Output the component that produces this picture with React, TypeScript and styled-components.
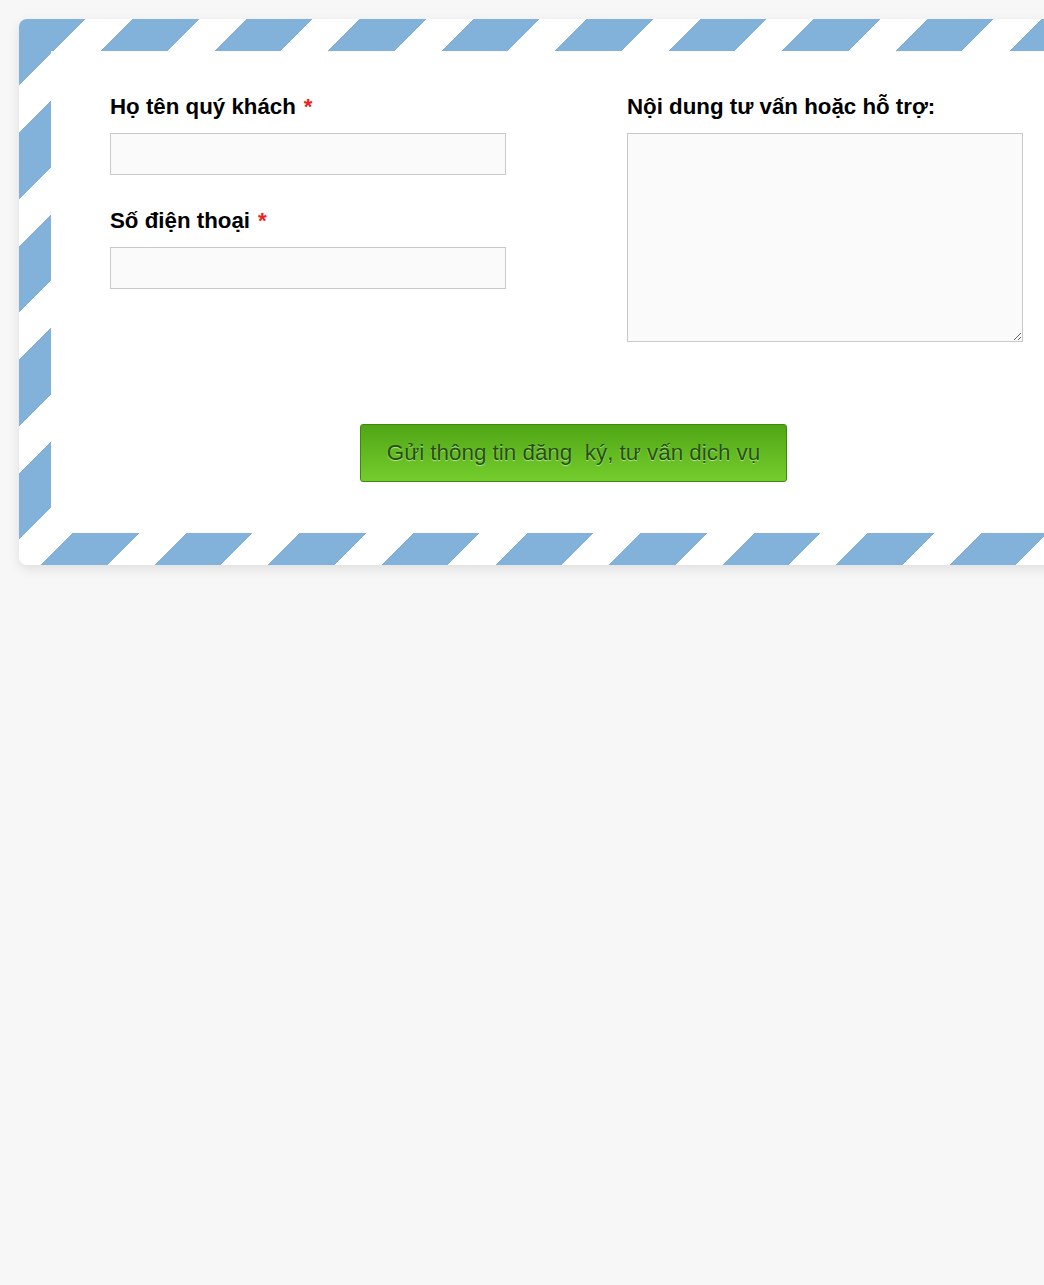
import React, { FC } from 'react';
import styled, { createGlobalStyle } from 'styled-components';

const GlobalStyle = createGlobalStyle`
  html, body {
    margin: 0;
    padding: 0;
    background: #f7f7f7;
    overflow-x: hidden;
  }
  body {
    font-family: 'Liberation Sans', Arial, sans-serif;
  }
`;

const Page = styled.div`
  padding: 19px 0 0 19px;
  min-height: 1266px;
`;

// airmail envelope look: diagonal blue stripes round a white sheet
const Envelope = styled.form`
  width: 1109px;
  padding: 32px;
  border-radius: 8px;
  background: repeating-linear-gradient(
    135deg,
    #82b2da 0 47px,
    #ffffff 47px 80.3px
  );
  box-shadow: 0 4px 12px rgba(0, 0, 0, 0.1);
  box-sizing: border-box;
`;

const Sheet = styled.div`
  background: #fff;
  padding: 41px 59px 51px;
  display: flex;
  flex-direction: column;
  align-items: center;
`;

const Columns = styled.div`
  align-self: stretch;
  display: grid;
  grid-template-columns: 396px 396px;
  column-gap: 121px;
`;

const Column = styled.div`
  display: flex;
  flex-direction: column;
`;

const Label = styled.label<{ $spaced?: boolean }>`
  display: block;
  font-size: 22.3px;
  font-weight: bold;
  line-height: 26px;
  color: #000;
  padding-top: 2px;
  margin-top: ${(p) => (p.$spaced ? '31px' : '0')};
  margin-bottom: 13px;
`;

const Required = styled.span`
  color: #f02020;
  margin-left: 8px;
`;

const TextInput = styled.input`
  display: block;
  width: 396px;
  height: 42px;
  box-sizing: border-box;
  border: 1px solid #c8c8c8;
  background: #fafafa;
  font-family: inherit;
  font-size: 16px;
  padding: 4px 8px;
`;

const Message = styled.textarea`
  display: block;
  width: 396px;
  height: 209px;
  box-sizing: border-box;
  border: 1px solid #c8c8c8;
  background: #fafafa;
  font-family: inherit;
  font-size: 16px;
  padding: 6px 8px;
`;

const SubmitButton = styled.button`
  margin-top: 82px;
  width: 427px;
  height: 58px;
  border: 1px solid #3a8a12;
  border-radius: 3px;
  background: linear-gradient(to bottom, #50a616 0%, #74cd2c 100%);
  color: #264f10;
  font-family: 'Liberation Sans', Arial, sans-serif;
  font-size: 22.4px;
  text-shadow: 0 1px 1px rgba(190, 235, 160, 0.9);
  cursor: pointer;
`;

const App: FC = () => (
  <>
    <GlobalStyle />
    <Page>
      <Envelope onSubmit={(e) => e.preventDefault()}>
        <Sheet>
          <Columns>
            <Column>
              <Label>
                Họ tên quý khách<Required>*</Required>
              </Label>
              <TextInput type="text" />
              <Label $spaced>
                Số điện thoại<Required>*</Required>
              </Label>
              <TextInput type="text" />
            </Column>
            <Column>
              <Label>Nội dung tư vấn hoặc hỗ trợ:</Label>
              <Message />
            </Column>
          </Columns>
          <SubmitButton type="submit">
            Gửi thông tin đăng{'\u00a0'} ký, tư vấn dịch vụ
          </SubmitButton>
        </Sheet>
      </Envelope>
    </Page>
  </>
);

export default App;
